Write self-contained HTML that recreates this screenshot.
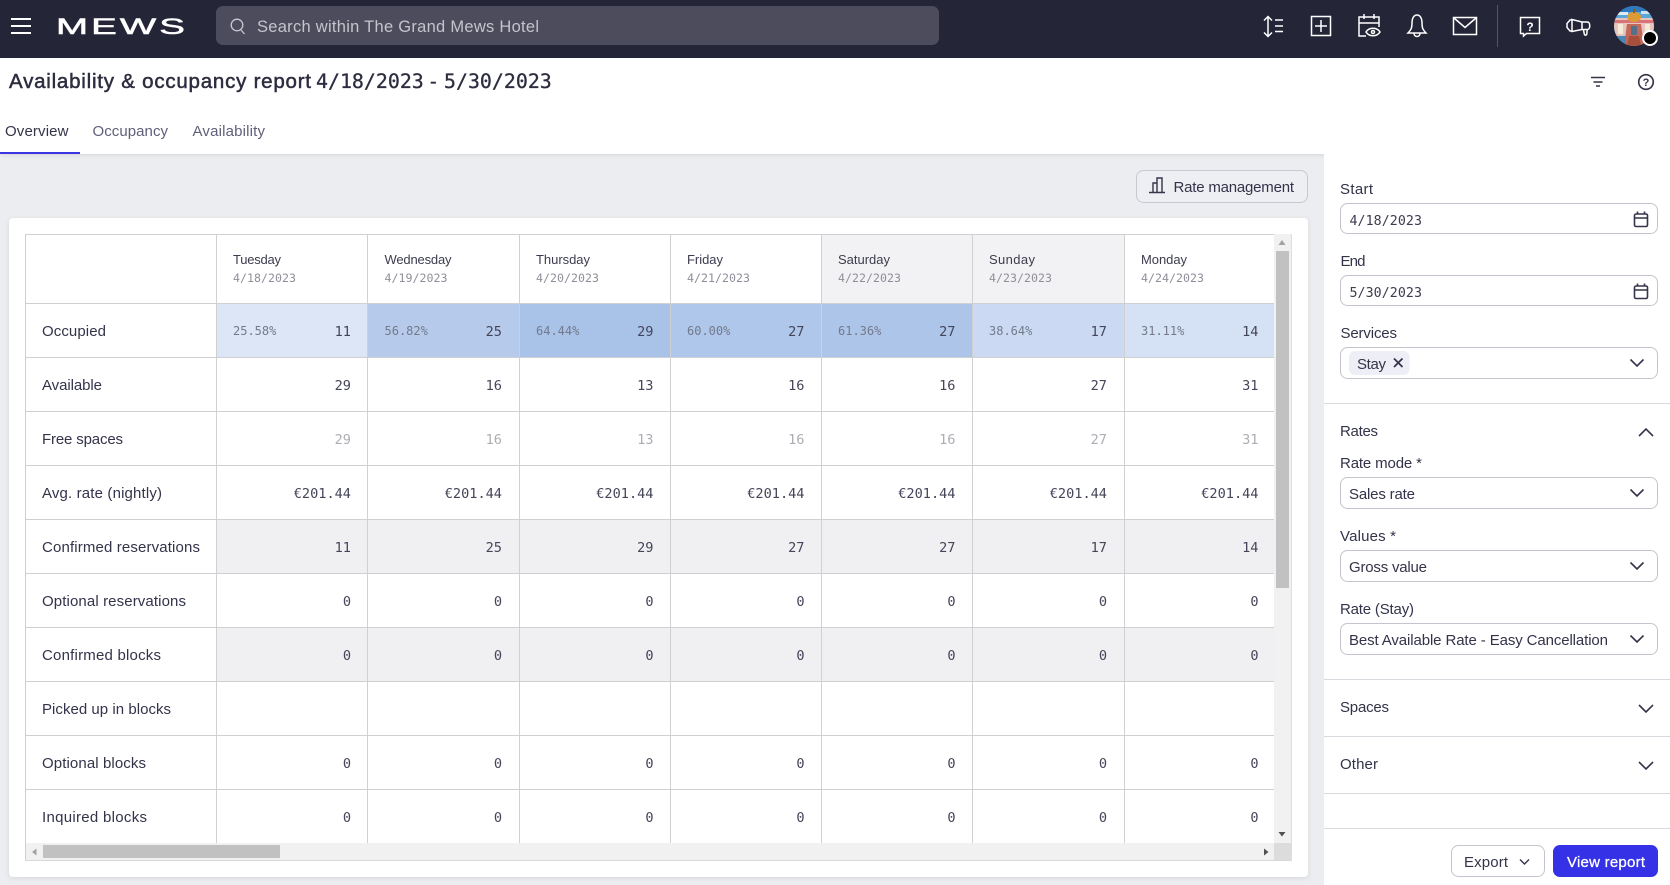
<!DOCTYPE html>
<html lang="en"><head><meta charset="utf-8"><title>Availability &amp; occupancy report</title>
<style>
html,body{margin:0;padding:0;background:#ecedf0;width:1670px;height:885px;overflow:hidden}
svg{display:block;position:absolute;left:0;top:0}
text{font-family:"Liberation Sans",sans-serif;fill:#33334a;font-size:15px}
.m{font-family:"DejaVu Sans Mono","Liberation Mono",monospace;font-size:13.6px;text-anchor:end;fill:#45455a}
.f{fill:#adadb5}
.p{font-family:"DejaVu Sans Mono",monospace;font-size:12px;fill:#737a8c}
.d{font-size:13px;fill:#3c3c4e}
.ds{font-family:"DejaVu Sans Mono",monospace;font-size:11.6px;fill:#8f8f9a}
.v{font-family:"DejaVu Sans Mono",monospace;font-size:13.3px;fill:#3c3c50}
.t{font-family:"DejaVu Sans Mono",monospace;font-size:19.9px;fill:#2d2d40;stroke:#2d2d40;stroke-width:.3}
.i{fill:none;stroke:#fff;stroke-width:1.5}
.c{fill:none;stroke:#33334a;stroke-width:1.6}
.box{fill:#fff;stroke:#c4c4cc;stroke-width:1}
.g{fill:#d0d0d2}
</style></head><body>
<svg width="1670" height="885" viewBox="0 0 1670 885" xmlns="http://www.w3.org/2000/svg">
<defs>
<filter id="s" x="-2%" y="-20%" width="104%" height="140%"><feDropShadow dx="0" dy="1" stdDeviation="2" flood-color="#000" flood-opacity=".1"/></filter>
<clipPath id="av"><circle cx="1634" cy="26" r="20"/></clipPath>
</defs>
<rect width="1670" height="885" fill="#ecedf0"/>

<!-- white page head -->
<rect x="0" y="58" width="1670" height="96" fill="#fff" filter="url(#s)"/>
<!-- top bar -->
<rect width="1670" height="58" fill="#252538"/>
<g fill="#fff"><rect x="11" y="18" width="20" height="2"/><rect x="11" y="25" width="20" height="2"/><rect x="11" y="32" width="20" height="2"/></g>
<text transform="translate(56 34) scale(1.75 1)" x="0" y="0" textLength="73.700" style="font-size:22px;fill:#fff;stroke:#fff;stroke-width:.5">MEWS</text>
<rect x="216" y="6" width="723" height="39" rx="7" fill="#4c4c5c"/>
<circle cx="237" cy="25" r="5.8" fill="none" stroke="#c8c8d0" stroke-width="1.3"/><path d="M241 30l3.500 4" stroke="#c8c8d0" stroke-width="1.3"/>
<text x="257" y="32" textLength="282" style="font-size:16.500px;fill:#c4c4cc">Search within The Grand Mews Hotel</text>

<!-- top icons -->
<g class="i">
<path d="M1268 17v19M1264 20.500l4-4 4 4M1264 32.500l4 4 4-4"/>
<path d="M1275 20h8M1275 26h8M1275 31.500h8"/>
<rect x="1311.500" y="16.500" width="19" height="19"/><path d="M1321 20v12M1315 26h12"/>
<path d="M1379 27v-10h-20v19h7M1359 23h20M1364 14v5M1374 14v5"/>
<path d="M1366 32c3-5 11-5 14 0c-3 5-11 5-14 0z"/><circle cx="1373" cy="32" r="1.500"/>
<path d="M1408 33c3-3 4-5 4-10c0-5 2-8 5-8s5 3 5 8c0 5 1 7 4 10z"/><path d="M1414 33.500a3 3 0 0 0 6 0"/>
<rect x="1453.500" y="17.500" width="23" height="17"/><path d="M1454 18l11 9.500 11-9.500"/>
<path d="M1520.500 17.500h19v16h-13l-3 2.500v-2.500h-3z"/>
<path d="M1572 20h-2l-3 3.500v4l3 3.500h2zM1572 19.500l10 2.500v7.500l-10 2zM1582 22h5.500c3 0 3 7.500 0 7.500h-5.500M1583.500 30l.8 4c.4 1.500 2.200 1.500 2.500 0l.4-4.500"/>
</g>
<text x="1530" y="31" text-anchor="middle" style="font-size:12px;font-weight:bold;fill:#fff">?</text>
<rect x="1497" y="5" width="1" height="42" fill="#55556a"/>
<g clip-path="url(#av)">
<rect x="1614" y="6" width="40" height="40" fill="#5aa7d8"/>
<rect x="1614" y="6" width="40" height="6" fill="#2f78bd"/>
<rect x="1618" y="12" width="10" height="3" fill="#dfeaf2"/><rect x="1641" y="11" width="9" height="3" fill="#cfe2ee"/>
<rect x="1614" y="18" width="40" height="18" fill="#e8c4bc"/>
<rect x="1614" y="20" width="40" height="3" fill="#d9737a"/>
<rect x="1618" y="24" width="5" height="10" fill="#f3ead8"/><rect x="1645" y="24" width="5" height="10" fill="#f3ead8"/>
<path d="M1624 46l3-22h14l3 22z" fill="#c4685a"/>
<path d="M1627 46l2-10h10l2 10z" fill="#a84f3c"/>
<rect x="1631" y="26" width="6" height="9" fill="#55708a"/>
<ellipse cx="1634" cy="17" rx="7" ry="5" fill="#dc9a34"/>
<rect x="1633" y="9" width="2" height="4" fill="#8a5a2a"/>
<rect x="1614" y="36" width="12" height="10" fill="#4a86b8"/>
<rect x="1642" y="36" width="12" height="10" fill="#c46a4a"/>
</g>
<circle cx="1650" cy="38" r="7" fill="#000" stroke="#fff" stroke-width="2"/>

<!-- page title -->
<text x="9" y="88" textLength="302" style="font-size:20.500px;fill:#2d2d40;stroke:#2d2d40;stroke-width:.5">Availability &amp; occupancy report</text>
<text class="t" x="316" y="88">4/18/2023</text>
<text x="430" y="88" textLength="8" style="font-size:20px;fill:#2d2d40;stroke:#2d2d40;stroke-width:.3">-</text>
<text class="t" x="444" y="88">5/30/2023</text>
<g fill="none" stroke="#33334a" stroke-width="1.600"><path d="M1591 77.500h14M1593.500 82h9M1596 86h4"/><circle cx="1646" cy="82" r="7.300"/></g>
<text x="1646" y="86" text-anchor="middle" style="font-size:11px;font-weight:bold">?</text>

<!-- tabs -->
<text x="5" y="136" textLength="63.500">Overview</text>
<text x="92.500" y="136" textLength="75.500" style="fill:#5f5f7a">Occupancy</text>
<text x="192.500" y="136" textLength="72.500" style="fill:#5f5f7a">Availability</text>
<rect x="0" y="152" width="80" height="2" fill="#3a35e0"/>

<!-- rate management -->
<rect x="1136.500" y="170.500" width="171" height="32" rx="7" fill="#eeeff2" stroke="#c8c8d0"/>
<path d="M1149 192.500h16M1153 192v-9h4M1157 192v-14h5v14" fill="none" stroke="#33334a" stroke-width="1.400"/>
<text x="1173.500" y="192" textLength="120.500">Rate management</text>

<!-- card -->
<rect x="9" y="218" width="1299" height="659" rx="4" fill="#fff" filter="url(#s)"/>

<!-- table backgrounds -->
<rect x="821" y="235" width="303" height="68" fill="#f2f2f4"/>
<rect x="216" y="303" width="152" height="54" fill="#dce6f6"/>
<rect x="367" y="303" width="152" height="54" fill="#b6cbeb"/>
<rect x="519" y="303" width="152" height="54" fill="#a9c2e8"/>
<rect x="670" y="303" width="152" height="54" fill="#afc7ea"/>
<rect x="821" y="303" width="152" height="54" fill="#adc5e9"/>
<rect x="973" y="303" width="152" height="54" fill="#cbdaf2"/>
<rect x="1124" y="303" width="150" height="54" fill="#d5e1f4"/>
<rect x="216" y="519" width="1058" height="54" fill="#f0f0f3"/>
<rect x="216" y="627" width="1058" height="54" fill="#f0f0f3"/>

<!-- grid -->
<g class="g">
<rect x="25" y="234" width="1249" height="1"/><rect x="25" y="234" width="1" height="626"/>
<rect x="216" y="235" width="1" height="608"/><rect x="367" y="235" width="1" height="608"/><rect x="519" y="235" width="1" height="608"/><rect x="670" y="235" width="1" height="608"/><rect x="821" y="235" width="1" height="608"/><rect x="972" y="235" width="1" height="608"/><rect x="1124" y="235" width="1" height="608"/>
<rect x="25" y="303" width="1249" height="1"/><rect x="25" y="357" width="1249" height="1"/><rect x="25" y="411" width="1249" height="1"/><rect x="25" y="465" width="1249" height="1"/><rect x="25" y="519" width="1249" height="1"/><rect x="25" y="573" width="1249" height="1"/><rect x="25" y="627" width="1249" height="1"/><rect x="25" y="681" width="1249" height="1"/><rect x="25" y="735" width="1249" height="1"/><rect x="25" y="789" width="1249" height="1"/>
</g>

<!-- header cells -->
<g class="hd">
<text class="d" x="233" y="264" textLength="48">Tuesday</text><text class="ds" x="233" y="282" textLength="63">4/18/2023</text>
<text class="d" x="384.500" y="264" textLength="67">Wednesday</text><text class="ds" x="384.500" y="282" textLength="63">4/19/2023</text>
<text class="d" x="536" y="264" textLength="54">Thursday</text><text class="ds" x="536" y="282" textLength="63">4/20/2023</text>
<text class="d" x="687" y="264" textLength="36">Friday</text><text class="ds" x="687" y="282" textLength="63">4/21/2023</text>
<text class="d" x="838" y="264" textLength="52">Saturday</text><text class="ds" x="838" y="282" textLength="63">4/22/2023</text>
<text class="d" x="989" y="264" textLength="46">Sunday</text><text class="ds" x="989" y="282" textLength="63">4/23/2023</text>
<text class="d" x="1141" y="264" textLength="46">Monday</text><text class="ds" x="1141" y="282" textLength="63">4/24/2023</text>
</g>

<!-- row labels -->
<text x="42" y="336" textLength="64">Occupied</text>
<text x="42" y="390" textLength="60">Available</text>
<text x="42" y="444" textLength="81">Free spaces</text>
<text x="42" y="498" textLength="120">Avg. rate (nightly)</text>
<text x="42" y="552" textLength="158">Confirmed reservations</text>
<text x="42" y="606" textLength="144">Optional reservations</text>
<text x="42" y="660" textLength="119">Confirmed blocks</text>
<text x="42" y="714" textLength="129">Picked up in blocks</text>
<text x="42" y="768" textLength="104">Optional blocks</text>
<text x="42" y="822" textLength="105">Inquired blocks</text>

<!-- occupied -->
<text class="p" x="233" y="335">25.58%</text><text class="m" x="351" y="336">11</text>
<text class="p" x="384.500" y="335">56.82%</text><text class="m" x="502" y="336">25</text>
<text class="p" x="536" y="335">64.44%</text><text class="m" x="653.500" y="336">29</text>
<text class="p" x="687" y="335">60.00%</text><text class="m" x="804.500" y="336">27</text>
<text class="p" x="838" y="335">61.36%</text><text class="m" x="955.500" y="336">27</text>
<text class="p" x="989" y="335">38.64%</text><text class="m" x="1107" y="336">17</text>
<text class="p" x="1141" y="335">31.11%</text><text class="m" x="1258.500" y="336">14</text>
<!-- available -->
<text class="m" x="351" y="390">29</text><text class="m" x="502" y="390">16</text><text class="m" x="653.500" y="390">13</text><text class="m" x="804.500" y="390">16</text><text class="m" x="955.500" y="390">16</text><text class="m" x="1107" y="390">27</text><text class="m" x="1258.500" y="390">31</text>
<!-- free -->
<text class="m f" x="351" y="444">29</text><text class="m f" x="502" y="444">16</text><text class="m f" x="653.500" y="444">13</text><text class="m f" x="804.500" y="444">16</text><text class="m f" x="955.500" y="444">16</text><text class="m f" x="1107" y="444">27</text><text class="m f" x="1258.500" y="444">31</text>
<!-- rate -->
<text class="m" x="351" y="498">€201.44</text><text class="m" x="502" y="498">€201.44</text><text class="m" x="653.500" y="498">€201.44</text><text class="m" x="804.500" y="498">€201.44</text><text class="m" x="955.500" y="498">€201.44</text><text class="m" x="1107" y="498">€201.44</text><text class="m" x="1258.500" y="498">€201.44</text>
<!-- confirmed res -->
<text class="m" x="351" y="552">11</text><text class="m" x="502" y="552">25</text><text class="m" x="653.500" y="552">29</text><text class="m" x="804.500" y="552">27</text><text class="m" x="955.500" y="552">27</text><text class="m" x="1107" y="552">17</text><text class="m" x="1258.500" y="552">14</text>
<!-- optional res -->
<text class="m" x="351" y="606">0</text><text class="m" x="502" y="606">0</text><text class="m" x="653.500" y="606">0</text><text class="m" x="804.500" y="606">0</text><text class="m" x="955.500" y="606">0</text><text class="m" x="1107" y="606">0</text><text class="m" x="1258.500" y="606">0</text>
<!-- confirmed blocks -->
<text class="m" x="351" y="660">0</text><text class="m" x="502" y="660">0</text><text class="m" x="653.500" y="660">0</text><text class="m" x="804.500" y="660">0</text><text class="m" x="955.500" y="660">0</text><text class="m" x="1107" y="660">0</text><text class="m" x="1258.500" y="660">0</text>
<!-- optional blocks -->
<text class="m" x="351" y="768">0</text><text class="m" x="502" y="768">0</text><text class="m" x="653.500" y="768">0</text><text class="m" x="804.500" y="768">0</text><text class="m" x="955.500" y="768">0</text><text class="m" x="1107" y="768">0</text><text class="m" x="1258.500" y="768">0</text>
<!-- inquired -->
<text class="m" x="351" y="822">0</text><text class="m" x="502" y="822">0</text><text class="m" x="653.500" y="822">0</text><text class="m" x="804.500" y="822">0</text><text class="m" x="955.500" y="822">0</text><text class="m" x="1107" y="822">0</text><text class="m" x="1258.500" y="822">0</text>

<!-- scrollbars -->
<rect x="1274" y="234" width="17" height="609" fill="#f1f1f1"/>
<rect x="26" y="843" width="1248" height="17" fill="#f1f1f1"/>
<rect x="1274" y="843" width="17" height="17" fill="#dcdcdc"/>
<rect x="1276" y="251" width="13" height="337" fill="#c1c1c1"/>
<rect x="43" y="845" width="237" height="13" fill="#c1c1c1"/>
<path d="M1282 240l3.500 5h-7z" fill="#a3a3a3"/><path d="M1282 836.500l-3.500-4.500h7z" fill="#505050"/>
<path d="M32 852l4.500-3.500v7z" fill="#a3a3a3"/><path d="M1268.500 852l-4.500-3.500v7z" fill="#505050"/>
<rect x="25" y="860" width="1267" height="1" fill="#d8d8da"/><rect x="1291" y="234" width="1" height="627" fill="#dedee0"/>

<!-- right panel -->
<rect x="1324" y="154" width="346" height="731" fill="#fff"/>
<text x="1340" y="194" textLength="33">Start</text>
<rect class="box" x="1340.500" y="203.500" width="317" height="30" rx="7"/>
<text class="v" x="1349.500" y="225" textLength="72.500">4/18/2023</text>
<g fill="none" stroke="#33334a" stroke-width="1.600"><rect x="1634.500" y="214" width="13" height="12.500" rx="1.500"/><path d="M1634.500 218h13M1637.500 211.500v2.500M1644.500 211.500v2.500"/></g>

<text x="1340.500" y="266" textLength="25">End</text>
<rect class="box" x="1340.500" y="275.500" width="317" height="30" rx="7"/>
<text class="v" x="1349.500" y="297" textLength="72.500">5/30/2023</text>
<g fill="none" stroke="#33334a" stroke-width="1.600"><rect x="1634.500" y="286" width="13" height="12.500" rx="1.500"/><path d="M1634.500 290h13M1637.500 283.500v2.500M1644.500 283.500v2.500"/></g>

<text x="1340.500" y="338" textLength="56.500">Services</text>
<rect class="box" x="1340.500" y="347.500" width="317" height="31" rx="7"/>
<rect x="1349" y="351" width="60.500" height="24" rx="6" fill="#eeeef6"/>
<text x="1357" y="369" textLength="29">Stay</text>
<path d="M1394 358.500l8.500 8.500M1402.500 358.500l-8.500 8.500" stroke="#33334a" stroke-width="1.700"/>
<path class="c" d="M1630.500 359.500l6.500 6.500 6.500-6.500"/>

<rect x="1324" y="403" width="346" height="1" fill="#d8d8de"/>
<text x="1340" y="436" textLength="38">Rates</text>
<path class="c" d="M1639 436l7-7 7 7"/>

<text x="1340" y="468" textLength="82">Rate mode *</text>
<rect class="box" x="1340.500" y="477.500" width="317" height="31" rx="7"/>
<text x="1349" y="499" textLength="66">Sales rate</text>
<path class="c" d="M1630.500 489.500l6.500 6.500 6.500-6.500"/>

<text x="1340" y="541" textLength="56">Values *</text>
<rect class="box" x="1340.500" y="550.500" width="317" height="31" rx="7"/>
<text x="1349" y="572" textLength="78">Gross value</text>
<path class="c" d="M1630.500 562.500l6.500 6.500 6.500-6.500"/>

<text x="1340" y="614" textLength="74">Rate (Stay)</text>
<rect class="box" x="1340.500" y="623.500" width="317" height="31" rx="7"/>
<text x="1349" y="645" textLength="259">Best Available Rate - Easy Cancellation</text>
<path class="c" d="M1630.500 635.500l6.500 6.500 6.500-6.500"/>

<rect x="1324" y="679" width="346" height="1" fill="#d8d8de"/>
<text x="1340" y="712" textLength="49">Spaces</text>
<path class="c" d="M1639 705l7 7 7-7"/>
<rect x="1324" y="736" width="346" height="1" fill="#d8d8de"/>
<text x="1340" y="769" textLength="38">Other</text>
<path class="c" d="M1639 762l7 7 7-7"/>
<rect x="1324" y="793" width="346" height="1" fill="#d8d8de"/>
<rect x="1324" y="828" width="346" height="1" fill="#d8d8de"/>

<rect class="box" x="1451.500" y="845.500" width="93" height="31" rx="7"/>
<text x="1464" y="867" textLength="44">Export</text>
<path d="M1520 859.500l4.500 4.500 4.500-4.500" fill="none" stroke="#33334a" stroke-width="1.400"/>
<rect x="1553" y="845" width="105" height="32" rx="7" fill="#3431e6"/>
<text x="1567" y="867" textLength="78" style="fill:#fff;stroke:#fff;stroke-width:.3">View report</text>
</svg>
</body></html>
